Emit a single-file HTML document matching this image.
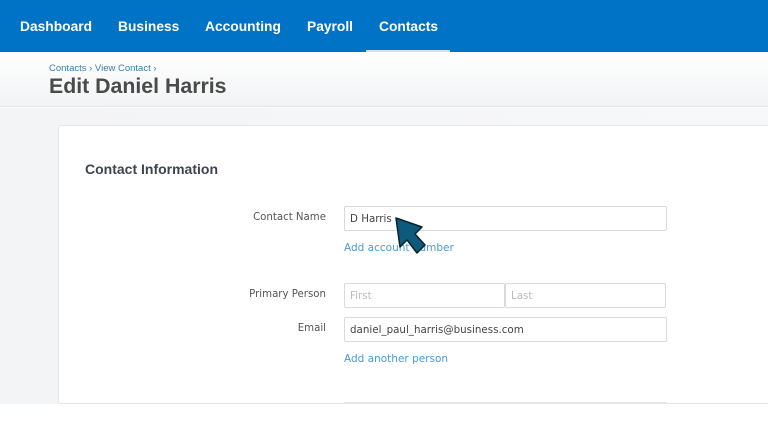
<!DOCTYPE html>
<html><head><meta charset="utf-8"><style>
*{margin:0;padding:0;box-sizing:border-box}
body{width:768px;height:432px;overflow:hidden;background:#fff;font-family:"Liberation Sans",sans-serif;position:relative}
.nav{position:absolute;left:0;top:0;width:768px;height:52px;background:#0173c7}
.nav span{position:absolute;top:19px;color:#fff;font-weight:bold;font-size:13.8px}
.ul{position:absolute;left:366px;top:50px;width:84px;height:3px;background:#cfe3f3}
.hdr{position:absolute;left:0;top:52px;width:768px;height:55px;background:linear-gradient(#fff,#f2f3f5);border-bottom:1px solid #e2e4e7}
.bc{position:absolute;left:49px;top:63px;font-size:9.5px;color:#3a7fa8}
.title{position:absolute;left:49px;top:74px;font-size:21.3px;font-weight:bold;color:#4a4a4a}
.bg{position:absolute;left:0;top:108px;width:768px;height:296px;background:linear-gradient(90deg,#f3f4f6,#f7f8fa)}
.card{position:absolute;left:58px;top:125px;width:720px;height:279px;background:#fff;border:1px solid #e3e5e8;border-radius:3px}
.h{position:absolute;left:85px;top:161px;font-size:14px;font-weight:bold;color:#3d4450}
.lbl{position:absolute;right:442px;color:#555;font-family:"DejaVu Sans",sans-serif;font-size:10.2px}
.inp{position:absolute;left:344px;width:323px;height:25px;border:1px solid #d8dadd;border-radius:2px;background:#fff;font-family:"DejaVu Sans",sans-serif;font-size:10.3px;color:#444;padding:6px 5px}
.lnk{position:absolute;left:344px;font-family:"DejaVu Sans",sans-serif;font-size:10.5px;color:#4a9ad8}
</style></head><body>
<div class="nav">
<span style="left:20px">Dashboard</span><span style="left:118px">Business</span><span style="left:205px">Accounting</span><span style="left:307px">Payroll</span><span style="left:379px">Contacts</span>
</div>
<div class="ul"></div>
<div class="hdr"></div>
<div class="bc">Contacts › View Contact ›</div>
<div class="title">Edit Daniel Harris</div>
<div class="bg"></div>
<div class="card"></div>
<div class="h">Contact Information</div>
<div class="lbl" style="top:212px">Contact Name</div>
<div class="inp" style="top:206px">D Harris</div>
<div class="lnk" style="top:242px">Add account number</div>
<div class="lbl" style="top:289px">Primary Person</div>
<div class="inp" style="top:283px;width:161px;color:#bbb">First</div>
<div class="inp" style="top:283px;left:505px;width:161px;color:#bbb">Last</div>
<div class="lbl" style="top:323px">Email</div>
<div class="inp" style="top:317px">daniel_paul_harris@business.com</div>
<div class="lnk" style="top:353px">Add another person</div>
<div style="position:absolute;left:344px;top:402px;width:323px;height:2px;background:#e3e5e8"></div>
<svg style="position:absolute;left:0;top:0" width="768" height="432"><polygon points="396,218 400,247 407,240 417,253 425,245 415,234 422,227" fill="#0e5a7c" stroke="#0a2230" stroke-width="1.5" stroke-linejoin="round"/></svg>
</body></html>
